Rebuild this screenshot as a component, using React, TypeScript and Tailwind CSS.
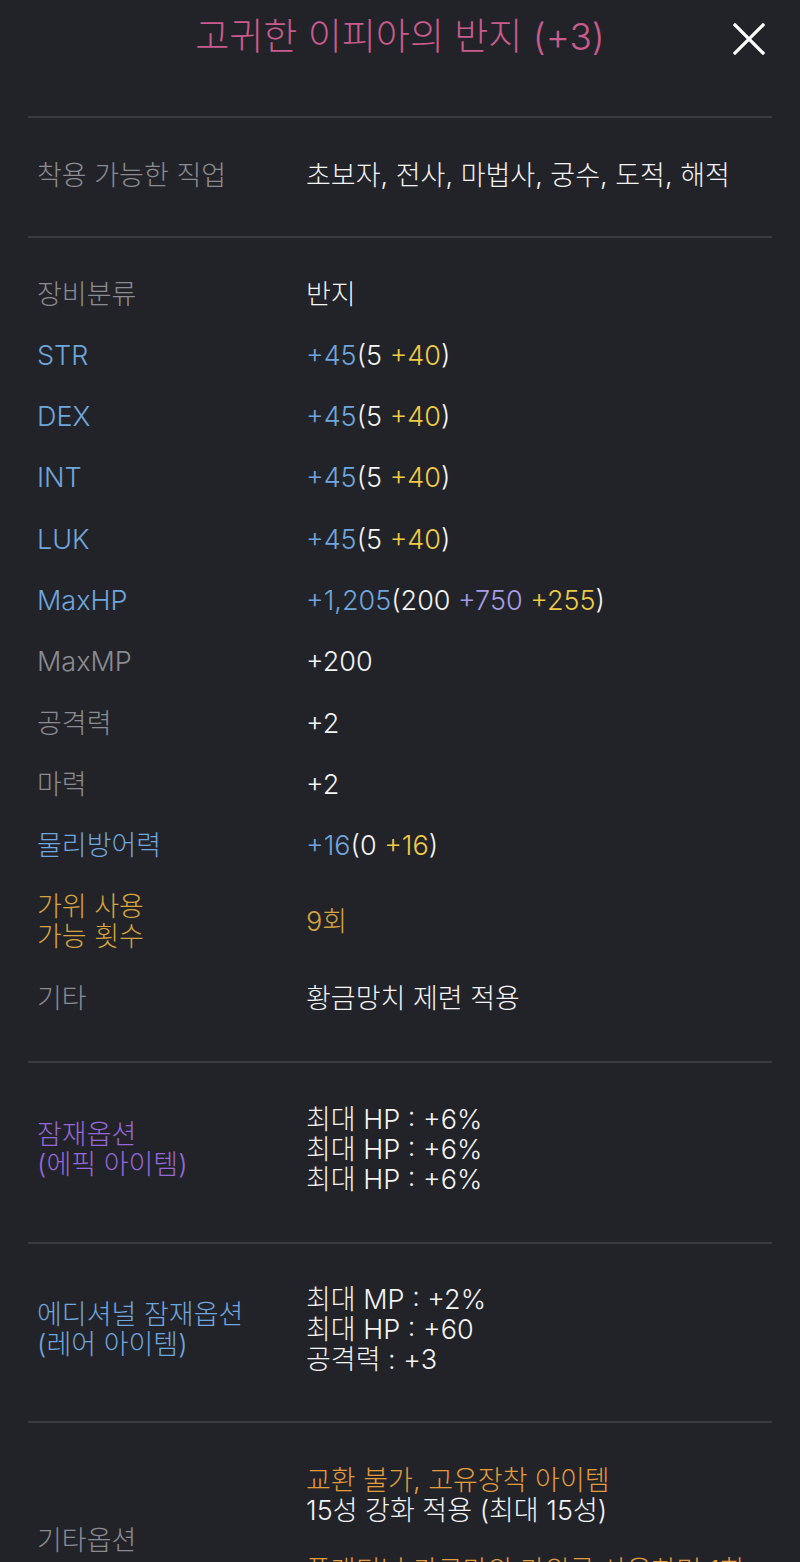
import React from "react";

const B = "text-[#6fa6de]";
const Y = "text-[#efcb48]";
const P = "text-[#a69de6]";
const W = "text-[#f4f4f5]";

type Row = { label: React.ReactNode; labelClass: string; value: React.ReactNode };

const stat = (a: string, base: string, b: string) => (
  <>
    <span className={B}>{a}</span>
    <span className={W}>({base} </span>
    <span className={Y}>{b}</span>
    <span className={W}>)</span>
  </>
);

const rows: Row[] = [
  { label: "장비분류", labelClass: "text-[#8b8c92]", value: <span className={W}>반지</span> },
  { label: "STR", labelClass: B, value: stat("+45", "5", "+40") },
  { label: "DEX", labelClass: B, value: stat("+45", "5", "+40") },
  { label: "INT", labelClass: B, value: stat("+45", "5", "+40") },
  { label: "LUK", labelClass: B, value: stat("+45", "5", "+40") },
  {
    label: "MaxHP",
    labelClass: B,
    value: (
      <>
        <span className={B}>+1,205</span>
        <span className={W}>(200 </span>
        <span className={P}>+750</span>
        <span className={W}> </span>
        <span className={Y}>+255</span>
        <span className={W}>)</span>
      </>
    ),
  },
  { label: "MaxMP", labelClass: "text-[#8b8c92]", value: <span className={W}>+200</span> },
  { label: "공격력", labelClass: "text-[#8b8c92]", value: <span className={W}>+2</span> },
  { label: "마력", labelClass: "text-[#8b8c92]", value: <span className={W}>+2</span> },
  { label: "물리방어력", labelClass: B, value: stat("+16", "0", "+16") },
  {
    label: (
      <>
        가위 사용
        <br />
        가능 횟수
      </>
    ),
    labelClass: "text-[#d6a43f]",
    value: <span className="text-[#d6a43f]">9회</span>,
  },
  { label: "기타", labelClass: "text-[#8b8c92]", value: <span className={W}>황금망치 제련 적용</span> },
];

function Divider() {
  return <div className="h-[2px] bg-[#3a3b42]" />;
}

function Pair({ label, labelClass, children }: { label: React.ReactNode; labelClass: string; children: React.ReactNode }) {
  return (
    <div className="grid grid-cols-[278px_1fr] items-center">
      <div className={`pl-[9px] ${labelClass}`}>{label}</div>
      <div>{children}</div>
    </div>
  );
}

export default function App() {
  return (
    <div
      className="min-h-[1562px] bg-[#222328] text-[27px] leading-[30px] font-light overflow-hidden"
      style={{ fontFamily: '"Inter", "Noto Sans CJK KR", "Noto Sans", sans-serif' }}
    >
      <div className="grid grid-cols-[1fr_auto_1fr] items-start h-[116px] pt-[15px]">
        <div />
        <div className="text-[37px] leading-[44px] text-[#c95b8d] whitespace-nowrap">고귀한 이피아의 반지 (+3)</div>
        <div className="flex justify-end pr-[35px] pt-[8px]">
          <svg width="32" height="32" viewBox="0 0 32 32" fill="none">
            <path d="M2 2 L30 30 M30 2 L2 30" stroke="#ffffff" strokeWidth="3.2" strokeLinecap="square" />
          </svg>
        </div>
      </div>

      <div className="mx-[28px]">
        <Divider />
        <div className="pt-[43px] pb-[45px]">
          <Pair label="착용 가능한 직업" labelClass="text-[#8b8c92]">
            <span className={W}>초보자, 전사, 마법사, 궁수, 도적, 해적</span>
          </Pair>
        </div>
        <Divider />
        <div className="pt-[26px] pb-[32px]">
          {rows.map((r, i) => (
            <div key={i} className="py-[15.65px]">
              <Pair label={r.label} labelClass={r.labelClass}>
                {r.value}
              </Pair>
            </div>
          ))}
        </div>
        <Divider />
        <div className="pt-[42px] pb-[47px]">
          <Pair
            label={
              <>
                잠재옵션
                <br />
                (에픽 아이템)
              </>
            }
            labelClass="text-[#9568d8]"
          >
            <div className={W}>
              <div>최대 HP : +6%</div>
              <div>최대 HP : +6%</div>
              <div>최대 HP : +6%</div>
            </div>
          </Pair>
        </div>
        <Divider />
        <div className="pt-[41px] pb-[46px]">
          <Pair
            label={
              <>
                에디셔널 잠재옵션
                <br />
                (레어 아이템)
              </>
            }
            labelClass={B}
          >
            <div className={W}>
              <div>최대 MP : +2%</div>
              <div>최대 HP : +60</div>
              <div>공격력 : +3</div>
            </div>
          </Pair>
        </div>
        <Divider />
        <div className="pt-[43px] pb-[46px]">
          <Pair label="기타옵션" labelClass="text-[#8b8c92]">
            <div>
              <div className="text-[#e39c3c]">교환 불가, 고유장착 아이템</div>
              <div className={W}>15성 강화 적용 (최대 15성)</div>
              <div>&nbsp;</div>
              <div className="text-[#e39c3c]">플래티넘 카르마의 가위를 사용하면 1회</div>
              <div className="text-[#e39c3c]">교환 가능</div>
            </div>
          </Pair>
        </div>
      </div>
    </div>
  );
}
